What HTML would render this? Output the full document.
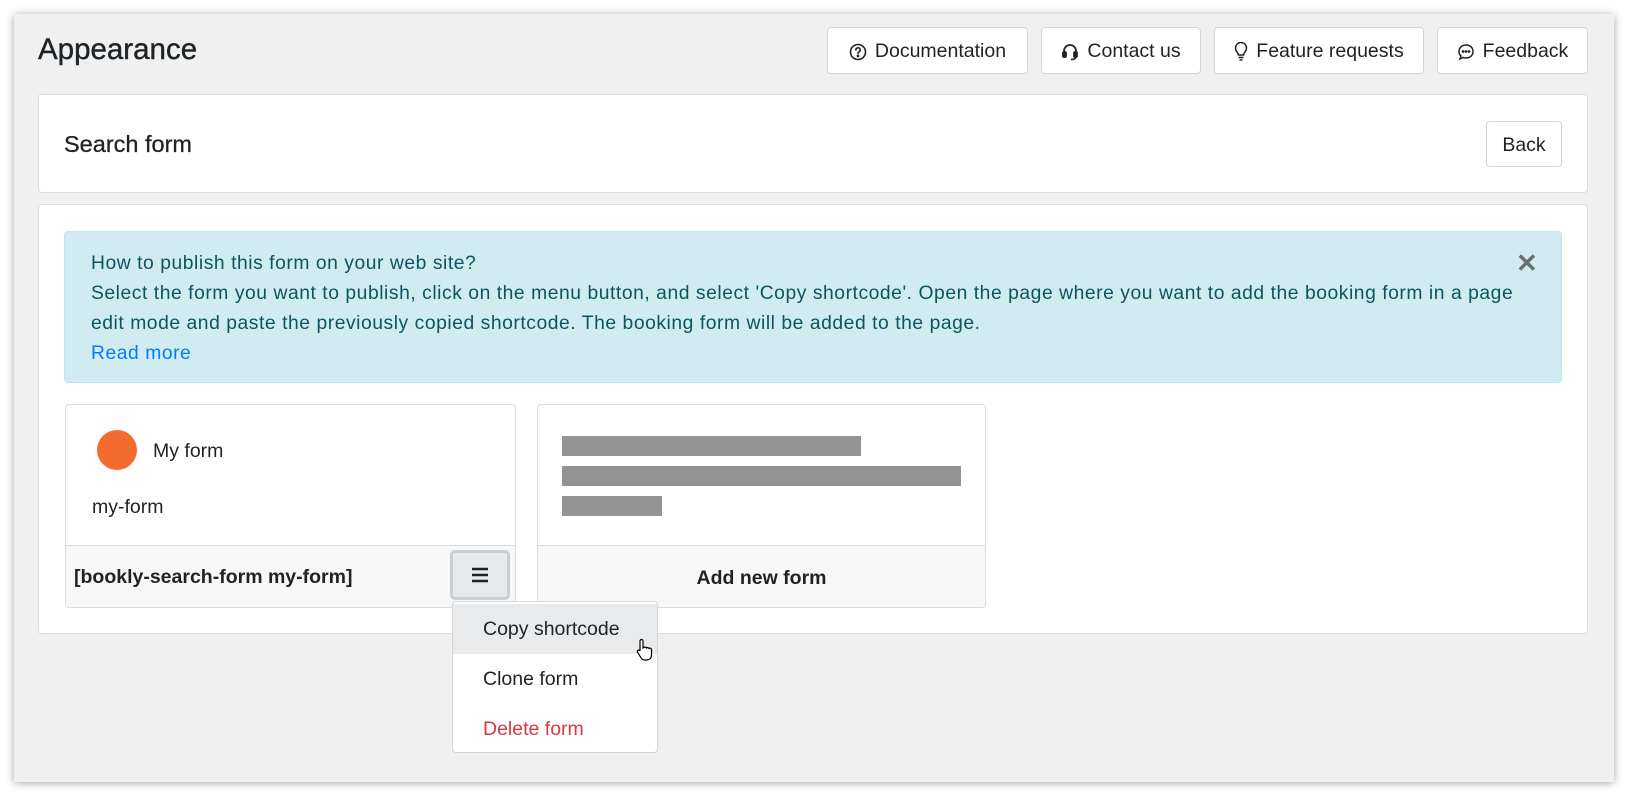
<!DOCTYPE html>
<html><head><meta charset="utf-8"><style>
*{box-sizing:border-box;margin:0;padding:0}
body{width:1628px;height:796px;background:#fff;font-family:"Liberation Sans",Arial,sans-serif;color:#1d2327;position:relative;overflow:hidden}
.panel{position:absolute;left:14px;top:14px;width:1600px;height:768px;background:#f0f0f0;box-shadow:0 1px 8px rgba(0,0,0,.35)}
.abs{position:absolute}
.btn{position:absolute;top:27px;height:47px;background:#fff;border:1px solid #d2d6dc;border-radius:4px;font-size:19.5px;display:flex;align-items:center;justify-content:center;gap:8px;color:#1d2327;padding-top:2px}
.card{position:absolute;background:#fff;border:1px solid #dcdcde;border-radius:4px}
.alert{position:absolute;left:64px;top:231px;width:1498px;height:152px;background:#d1ecf1;border:1px solid #bee5eb;border-radius:4px;color:#0c5460;font-size:19.3px;line-height:30px;padding:17px 0 0 26px;letter-spacing:0.55px;white-space:nowrap}
.fc{position:absolute;top:404px;height:204px;background:#fff;border:1px solid #dcdcde;border-radius:4px;overflow:hidden}
.foot{position:absolute;left:0;right:0;bottom:0;height:62px;background:#f7f7f7;border-top:1px solid #dcdcde;font-weight:bold;font-size:19.5px}
.bar{position:absolute;background:#939393;left:24px}
.dd{position:absolute;left:452px;top:601px;width:206px;height:152px;background:#fff;border:1px solid #d2d6dc;border-radius:4px;font-size:19.5px;padding-top:2px}
.dd div{height:50px;line-height:50px;padding-left:30px}
</style></head><body>
<div class="panel"></div>
<div class="abs" style="left:38px;top:33px;font-size:29.5px;color:#1d2327;-webkit-text-stroke:0.4px #1d2327">Appearance</div>

<div class="btn" style="left:827px;width:201px">
<svg width="18" height="18" viewBox="0 0 18 18" fill="none" stroke="#1d2327" stroke-width="1.6"><circle cx="9" cy="9" r="7.5"/><path d="M6.8 7a2.2 2.2 0 1 1 3 2c-.6.3-.8.7-.8 1.4" stroke-linecap="round"/><circle cx="9" cy="13" r=".6" fill="#1d2327"/></svg>Documentation</div>
<div class="btn" style="left:1041px;width:160px">
<svg width="18" height="18" viewBox="0 0 18 18" fill="none" stroke="#1d2327" stroke-width="1.8"><path d="M3 11V8a6 6 0 0 1 12 0v3"/><rect x="2" y="9" width="3" height="5" rx="1" fill="#1d2327"/><rect x="13" y="9" width="3" height="5" rx="1" fill="#1d2327"/><path d="M14.5 14c0 2-2 2.5-4.5 2.5"/></svg>Contact us</div>
<div class="btn" style="left:1214px;width:210px">
<svg width="14" height="20" viewBox="0 0 14 20" fill="none" stroke="#1d2327" stroke-width="1.5"><path d="M4.5 13c0-2-3-3.5-3-7a5.5 5.5 0 0 1 11 0c0 3.5-3 5-3 7z"/><path d="M4.5 15.5h5M5.5 18h3"/></svg>Feature requests</div>
<div class="btn" style="left:1437px;width:151px">
<svg width="18" height="18" viewBox="0 0 18 18" fill="none" stroke="#1d2327" stroke-width="1.5"><path d="M9 2c4 0 7 2.7 7 6.5S13 15 9 15c-1 0-2-.2-2.8-.5L3 16l1-3C2.7 11.8 2 10.3 2 8.5 2 4.7 5 2 9 2z"/><circle cx="6" cy="8.5" r=".6" fill="#1d2327"/><circle cx="9" cy="8.5" r=".6" fill="#1d2327"/><circle cx="12" cy="8.5" r=".6" fill="#1d2327"/></svg>Feedback</div>

<div class="card" style="left:38px;top:94px;width:1550px;height:99px"></div>
<div class="abs" style="left:64px;top:131px;font-size:23.5px;color:#1d2327;-webkit-text-stroke:0.3px #1d2327">Search form</div>
<div class="btn" style="left:1486px;top:121px;height:46px;width:76px">Back</div>

<div class="card" style="left:38px;top:204px;width:1550px;height:430px"></div>
<div class="alert">How to publish this form on your web site?<br>Select the form you want to publish, click on the menu button, and select 'Copy shortcode'. Open the page where you want to add the booking form in a page<br>edit mode and paste the previously copied shortcode. The booking form will be added to the page.<br><span style="color:#007bff">Read more</span>
<div class="abs" style="left:1451px;top:18px;font-size:26px;font-weight:bold;color:#6c6c6c;line-height:26px;letter-spacing:0">✕</div></div>

<div class="fc" style="left:65px;width:451px">
<div class="abs" style="left:31px;top:25px;width:40px;height:40px;border-radius:50%;background:#f36b2f"></div>
<div class="abs" style="left:87px;top:35px;font-size:19.5px">My form</div>
<div class="abs" style="left:26px;top:91px;font-size:19.5px">my-form</div>
<div class="foot"><div class="abs" style="left:8px;top:20px">[bookly-search-form my-form]</div>
<div class="abs" style="left:384px;top:4px;width:60px;height:50px;border:3px solid #c9ced4;border-radius:5px;background:#e8e9eb;display:flex;align-items:center;justify-content:center"><svg width="18" height="16" viewBox="0 0 18 16"><path d="M1 2h16M1 8h16M1 14h16" stroke="#1d2327" stroke-width="2.4"/></svg></div></div>
</div>

<div class="fc" style="left:537px;width:449px">
<div class="bar" style="top:31px;width:299px;height:20px"></div>
<div class="bar" style="top:61px;width:399px;height:20px"></div>
<div class="bar" style="top:91px;width:100px;height:20px"></div>
<div class="foot" style="text-align:center;line-height:64px">Add new form</div>
</div>

<div class="dd">
<div style="background:#e9eaec">Copy shortcode</div>
<div>Clone form</div>
<div style="color:#dc3545">Delete form</div>
</div>
<svg class="abs" style="left:634px;top:638px" width="20" height="24" viewBox="0 0 20 24"><path d="M6 13V3a1.5 1.5 0 0 1 3 0v7l1-.5a1.5 1.5 0 0 1 2.5.5 1.5 1.5 0 0 1 2.5.5 1.5 1.5 0 0 1 2.5 1V17c0 3-2 5-5 5h-2c-2 0-3-1-4-3l-3-5a1.4 1.4 0 0 1 2.2-1.6z" fill="#fff" stroke="#000" stroke-width="1.2"/></svg>
</body></html>
